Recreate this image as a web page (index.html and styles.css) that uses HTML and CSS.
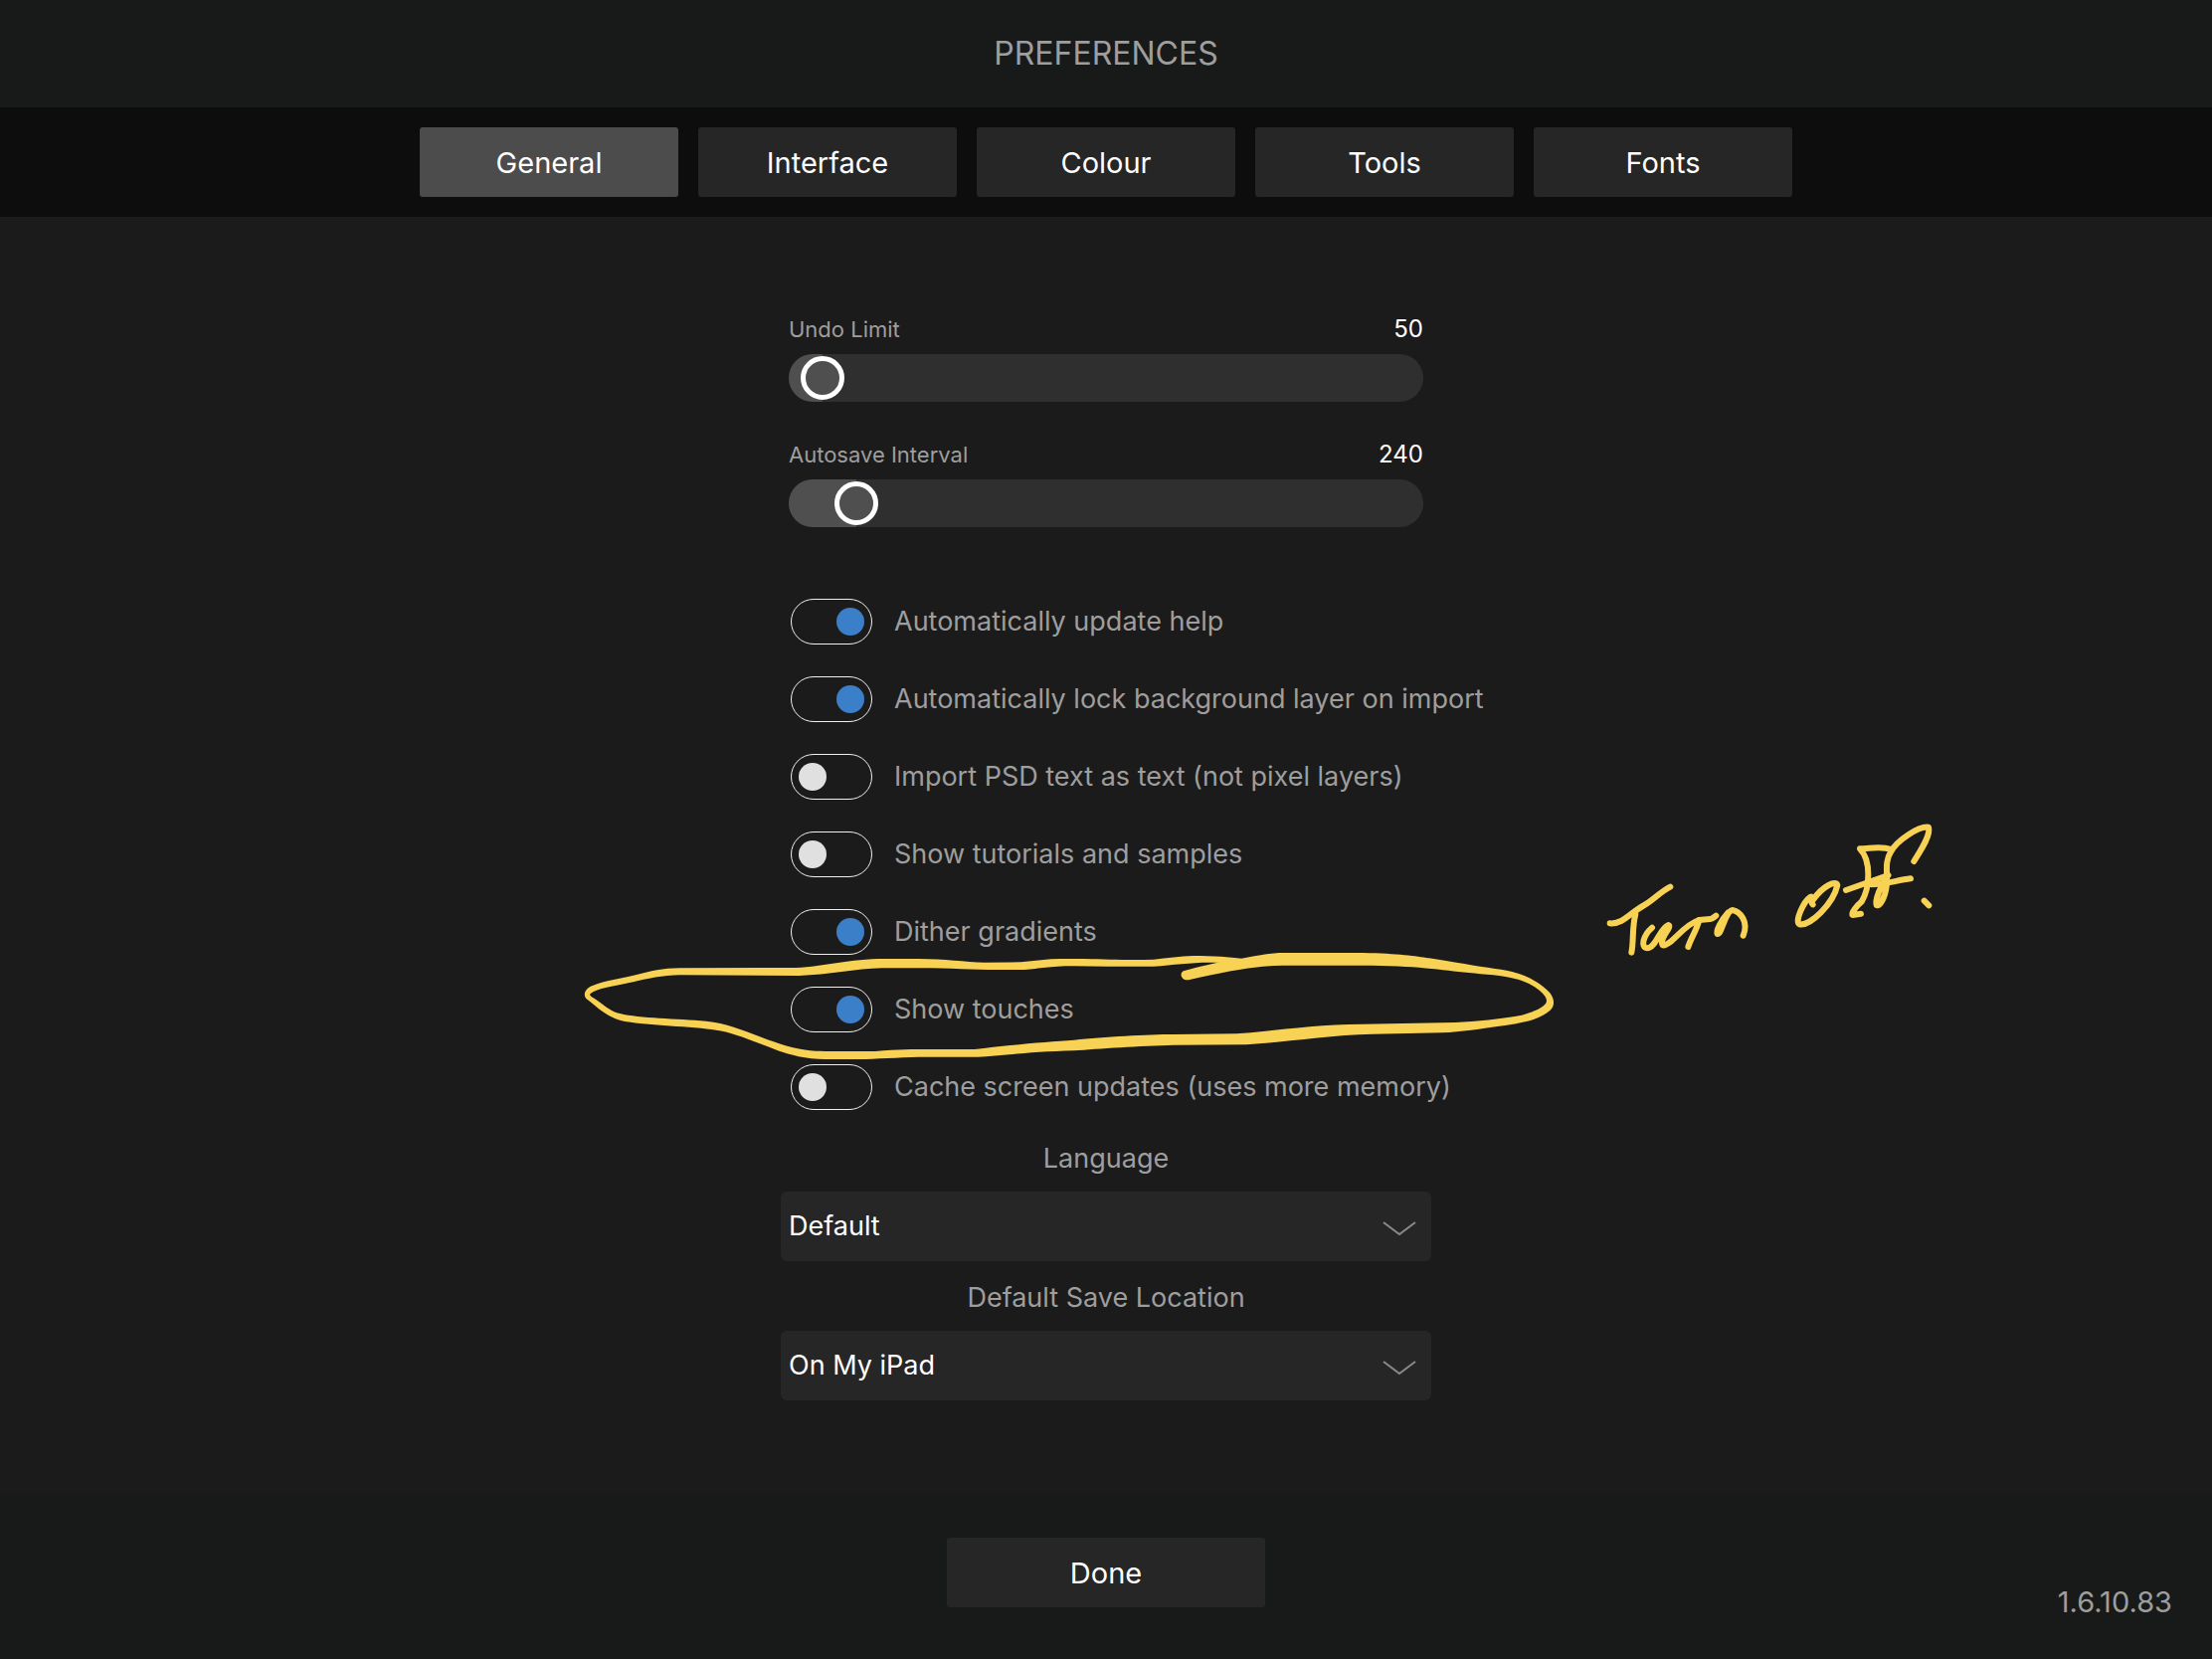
FILE: index.html
```
<!DOCTYPE html>
<html lang="en">

<head>
    <meta charset="UTF-8">
    <meta name="viewport" content="width=device-width, initial-scale=1.0">
    <title>Preferences</title>
    <link rel="stylesheet" href="styles.css">
</head>

<body>
    <header class="header">
        <h1>PREFERENCES</h1>
    </header>

    <nav class="tabs">
        <button class="btn active" type="button">General</button>
        <button class="btn" type="button">Interface</button>
        <button class="btn" type="button">Colour</button>
        <button class="btn" type="button">Tools</button>
        <button class="btn" type="button">Fonts</button>
    </nav>

    <main class="content">
        <form class="settings">
            <div class="sliders">
                <div class="slider">
                    <div class="slider-head">
                        <label for="undo">Undo Limit</label>
                        <output for="undo">50</output>
                    </div>
                    <input id="undo" type="range" min="0" max="2500" value="50" style="--fill: 0.02">
                </div>
                <div class="slider">
                    <div class="slider-head">
                        <label for="autosave">Autosave Interval</label>
                        <output for="autosave">240</output>
                    </div>
                    <input id="autosave" type="range" min="0" max="3100" value="240" style="--fill: 0.077">
                </div>
            </div>

            <div class="toggles">
                <label class="toggle"><input type="checkbox" checked>Automatically update help</label>
                <label class="toggle"><input type="checkbox" checked>Automatically lock background layer on import</label>
                <label class="toggle"><input type="checkbox">Import PSD text as text (not pixel layers)</label>
                <label class="toggle"><input type="checkbox">Show tutorials and samples</label>
                <label class="toggle"><input type="checkbox" checked>Dither gradients</label>
                <label class="toggle"><input type="checkbox" checked>Show touches</label>
                <label class="toggle"><input type="checkbox">Cache screen updates (uses more memory)</label>
            </div>

            <div class="field">
                <label for="language">Language</label>
                <div class="dropdown">
                    <select id="language">
                        <option>Default</option>
                    </select>
                    <svg class="chevron" viewBox="0 0 34 16" aria-hidden="true">
                        <path d="M1 1 L17 13 L33 1" />
                    </svg>
                </div>
            </div>

            <div class="field">
                <label for="location">Default Save Location</label>
                <div class="dropdown">
                    <select id="location">
                        <option>On My iPad</option>
                    </select>
                    <svg class="chevron" viewBox="0 0 34 16" aria-hidden="true">
                        <path d="M1 1 L17 13 L33 1" />
                    </svg>
                </div>
            </div>
        </form>

        <!-- pen marks drawn over the form -->
        <svg class="marks" viewBox="580 820 1390 250" aria-hidden="true">
            <g transform="translate(570 920) scale(0.33333)">
                <path class="loop" d="M1865 167 C1900 158 1960 142 2030 132 C2080 121 2130 114 2160 114 L2400 114
                    C2510 116 2560 124 2600 130 C2680 142 2740 154 2800 162 C2860 169 2920 188 2965 235
                    C2980 255 2980 275 2965 288 C2930 318 2880 325 2830 333 C2750 344 2700 352 2640 355
                    L2430 359 C2300 362 2180 382 2050 391 L1830 392 C1730 395 1600 403 1530 409
                    C1400 412 1320 424 1240 428 L1060 428 C1000 430 930 434 880 435 L780 435
                    C720 435 670 420 640 410 C570 385 500 352 450 347 C380 337 240 332 180 322
                    C120 312 90 275 58 252 C48 240 55 222 75 214 C110 198 170 190 210 180
                    C250 170 290 160 340 160 L690 159 C780 155 850 132 960 132 L1060 132
                    C1140 132 1200 142 1260 143 L1370 142 C1410 138 1450 132 1490 132 L1560 132
                    C1640 134 1700 137 1770 134 C1810 130 1850 124 1890 123 C1950 123 2000 127 2035 131
                    L1970 144 C1900 140 1840 150 1770 155 L1630 155 L1530 154 C1450 154 1430 162 1380 165
                    L1270 165 C1180 162 1100 158 950 160 C870 162 790 180 700 183 L340 181
                    C290 182 240 192 200 202 C140 215 90 222 72 236 C66 240 70 244 80 250
                    C120 278 130 290 160 297 C220 312 330 312 420 320 C500 328 560 362 640 388
                    C700 408 740 411 780 411 L930 411 C1000 405 1050 405 1080 405 L1230 405
                    C1330 392 1450 382 1530 377 C1620 368 1750 360 1830 360 L2020 358
                    C2130 350 2250 330 2400 329 L2680 324 C2750 320 2830 312 2880 302
                    C2940 285 2955 270 2955 258 C2955 240 2920 212 2880 198 C2830 180 2770 180 2720 174
                    C2640 166 2560 152 2400 152 L2160 152 C2080 153 1990 170 1875 196
                    C1850 198 1845 170 1865 167 Z" />
            </g>
            <g class="note" transform="translate(1600 810) scale(0.33333)">
                <path d="M56 355 C95 358 115 325 155 303 C185 287 205 262 238 245" />
                <path d="M133 328 C122 370 128 410 121 443" />
                <path d="M183 368 C155 392 148 428 168 430 C195 430 207 368 232 360 C246 366 203 400 215 421 C240 425 275 360 325 345 C318 375 300 400 292 426" />
                <path d="M325 345 L350 343 C363 343 370 338 376 332" />
                <path d="M413 322 C392 345 374 380 380 387 C394 388 402 322 425 315 C450 320 475 350 458 392" />
                <path d="M668 298 C658 286 670 270 660 276 C640 290 612 350 628 358 C660 364 730 295 742 240 C738 225 700 240 668 285" />
                <path d="M768 255 L895 210" />
                <path d="M905 132 C870 120 840 130 810 130 C845 165 840 250 815 290 C800 302 782 325 788 330 L813 326" />
                <path d="M973 168 C990 140 1025 90 1017 65 C990 60 920 105 903 140 C883 170 895 205 890 245 C885 280 870 305 860 300 C855 285 872 240 895 210" />
                <path d="M845 238 C880 238 920 226 963 220" />
                <path d="M1004 287 L1018 301" />
            </g>
        </svg>
    </main>

    <footer class="footer">
        <button class="btn done" type="button">Done</button>
        <span class="version">1.6.10.83</span>
    </footer>
</body>

</html>
```
FILE: styles.css
```
* {
    box-sizing: border-box;
}

body {
    margin: 0;
    min-height: 100vh;
    display: flex;
    flex-direction: column;
    background: #1b1b1b;
    color: #9e9e9e;
    font-family: Inter, "Liberation Sans", sans-serif;
    font-size: 27px;
    line-height: 34px;
}

button,
select {
    font: inherit;
    color: #fff;
    border: none;
}

.header {
    background: #181a19;
    padding: 34px 0;
    text-align: center;
}

.header h1 {
    margin: 0;
    font-size: 32px;
    line-height: 40px;
    font-weight: 400;
}

.tabs {
    display: flex;
    justify-content: center;
    gap: 20px;
    padding: 20px;
    background: #0d0d0d;
}

.btn {
    width: 260px;
    height: 70px;
    padding: 2px 0 0;
    background: #262626;
    border-radius: 3px;
    font-size: 29px;
}

.btn.active {
    background: #4c4c4c;
}

.content {
    position: relative;
    flex: 1;
    padding: 97px 20px 40px;
}

.settings {
    max-width: 654px;
    margin: 0 auto;
}

/* sliders */
.sliders {
    display: flex;
    flex-direction: column;
    gap: 37px;
    padding: 0 8px;
    margin-bottom: 72px;
}

.slider-head {
    display: flex;
    justify-content: space-between;
    font-size: 22px;
    line-height: 32px;
    margin-bottom: 9px;
}

.slider-head output {
    font-size: 24px;
    color: #fff;
}

.slider input {
    appearance: none;
    display: block;
    width: 100%;
    height: 48px;
    margin: 0;
    border-radius: 24px;
    background: linear-gradient(to right, #4f4f4f calc(22px + (100% - 44px) * var(--fill)), #2f2f2f 0);
}

.slider input::-webkit-slider-thumb {
    appearance: none;
    width: 44px;
    height: 44px;
    border: 5px solid #fff;
    border-radius: 50%;
    background: #4f4f4f;
}

/* switches */
.toggles {
    display: flex;
    flex-direction: column;
    gap: 32px;
    padding-left: 10px;
}

.toggle {
    display: flex;
    align-items: center;
    gap: 22px;
    white-space: nowrap;
}

.toggle input {
    appearance: none;
    display: flex;
    align-items: center;
    flex: none;
    width: 82px;
    height: 46px;
    margin: 0;
    padding: 0 7px;
    border: 1px solid #f0f0f0;
    border-radius: 23px;
}

.toggle input::before {
    content: "";
    width: 28px;
    height: 28px;
    border-radius: 50%;
    background: #e0e0e0;
}

.toggle input:checked {
    justify-content: flex-end;
}

.toggle input:checked::before {
    background: #3a7fc8;
}

/* drop-downs */
.field {
    margin-top: 20px;
    text-align: center;
}

.toggles + .field {
    margin-top: 32px;
}

.field label {
    display: block;
    margin-bottom: 16px;
}

.dropdown {
    display: grid;
    align-items: center;
}

.dropdown > * {
    grid-area: 1 / 1;
}

.dropdown select {
    appearance: none;
    width: 100%;
    height: 70px;
    padding: 0 8px;
    background: #262626;
    border-radius: 6px;
}

.chevron {
    justify-self: end;
    width: 34px;
    height: 16px;
    margin-right: 15px;
    margin-top: 6px;
    fill: none;
    stroke: #8a8a8a;
    stroke-width: 2;
    pointer-events: none;
}

.marks {
    position: absolute;
    top: 602px;
    left: calc(50% - 532px);
    width: 1390px;
    height: 250px;
    pointer-events: none;
}

.loop {
    fill: #f8d254;
}

.note {
    fill: none;
    stroke: #f8d254;
    stroke-width: 18;
    stroke-linecap: round;
    stroke-linejoin: round;
}

.footer {
    display: grid;
    grid-template-columns: 1fr auto 1fr;
    min-height: 165px;
    padding: 43px 40px 40px;
    background: #181a19;
}

.done {
    grid-column: 2;
    width: 320px;
}

.version {
    justify-self: end;
    align-self: end;
    font-size: 29px;
}
```
